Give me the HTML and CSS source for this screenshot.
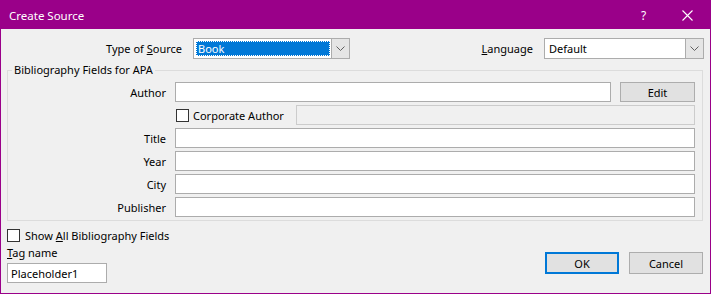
FILE: index.html
```html
<!DOCTYPE html>
<html lang="en">
<head>
    <meta charset="UTF-8">
    <meta name="viewport" content="width=device-width, initial-scale=1.0">
    <title>Create Source</title>
    <link rel="stylesheet" href="styles.css">
</head>
<body>

    <div class="dialog">
        <div class="titlebar">
            <span class="title">Create Source</span>
            <span class="help">?</span>
            <svg class="close" width="11" height="11" viewBox="0 0 11 11">
                <path d="M0.5 0.5 L10.5 10.5 M10.5 0.5 L0.5 10.5" stroke="#fff" stroke-width="1.1" fill="none"/>
            </svg>
        </div>

        <div class="content">
            <div class="top-row">
                <span class="type-label">Type of <u>S</u>ource</span>
                <div class="combo combo-type">
                    <span class="combo-value"><span class="selected">Book</span></span>
                    <span class="combo-btn">
                        <svg width="9" height="5" viewBox="0 0 9 5"><path d="M0.5 0.5 L4.5 4.5 L8.5 0.5" stroke="#606060" fill="none"/></svg>
                    </span>
                </div>
                <span class="lang-label"><u>L</u>anguage</span>
                <div class="combo combo-lang">
                    <span class="combo-value">Default</span>
                    <span class="combo-btn">
                        <svg width="9" height="5" viewBox="0 0 9 5"><path d="M0.5 0.5 L4.5 4.5 L8.5 0.5" stroke="#606060" fill="none"/></svg>
                    </span>
                </div>
            </div>

            <fieldset class="group">
                <legend>Bibliography Fields for APA</legend>
                <div class="fields">
                    <span class="field-label">Author</span>
                    <div class="author-line">
                        <input type="text" class="text">
                        <button class="btn edit">Edit</button>
                    </div>

                    <span></span>
                    <div class="corp-line">
                        <span class="check"></span>
                        <span class="corp-label">Corporate Author</span>
                        <input type="text" class="text" disabled>
                    </div>

                    <span class="field-label">Title</span>
                    <input type="text" class="text">

                    <span class="field-label">Year</span>
                    <input type="text" class="text">

                    <span class="field-label">City</span>
                    <input type="text" class="text">

                    <span class="field-label">Publisher</span>
                    <input type="text" class="text">
                </div>
            </fieldset>

            <div class="show-all">
                <span class="check"></span>
                <span>Show <u>A</u>ll Bibliography Fields</span>
            </div>

            <div class="bottom">
                <div class="tag">
                    <div class="tag-label"><u>T</u>ag name</div>
                    <input type="text" class="text tag-input" value="Placeholder1">
                </div>
                <div class="buttons">
                    <button class="btn ok">OK</button>
                    <button class="btn">Cancel</button>
                </div>
            </div>
        </div>
    </div>

</body>
</html>
```

FILE: styles.css
```css
body {
    margin: 0;
    font-family: "Noto Sans", "Open Sans", sans-serif;
    font-size: 11px;
    color: #000;
    background: #f0f0f0;
}
.dialog {
    width: 711px;
    height: 294px;
    box-sizing: border-box;
    border: 1px solid #9a0089;
    border-top: none;
    background: #f0f0f0;
    display: flex;
    flex-direction: column;
}
.titlebar {
    height: 29px;
    box-sizing: border-box;
    margin: 0 -1px;
    padding: 2px 0 0 9px;
    background: #9a0089;
    color: #fff;
    display: flex;
    align-items: center;
}
.title {
    flex: 1;
    font-size: 11.5px;
}
.help {
    width: 12px;
    margin-right: 29px;
    font-size: 12px;
}
.close {
    margin-right: 18px;
}
.content {
    padding: 9px 6px 0 6px;
}

/* top row */
.top-row {
    display: flex;
    align-items: center;
    height: 21px;
}
.type-label {
    width: 175px;
    text-align: right;
    margin-right: 11px;
}
.combo {
    height: 21px;
    box-sizing: border-box;
    border: 1px solid #acacac;
    background: #fff;
    display: flex;
}
.combo-type {
    width: 157px;
}
.combo-lang {
    width: 160px;
}
.lang-label {
    margin-left: auto;
    margin-right: 11px;
}
.combo-value {
    flex: 1;
    padding: 2px 1px 2px 2px;
    display: flex;
    align-items: center;
    line-height: 15px;
}
.selected {
    flex: 1;
    background: #0078d7;
    color: #fff;
    padding-left: 2px;
    outline: 1px dotted #ffffff;
    outline-offset: -1px;
}
.combo-lang .combo-value {
    padding-left: 4px;
}
.combo-btn {
    width: 17px;
    margin: -1px -1px -1px 0;
    border: 1px solid #acacac;
    background: #e5e5e5;
    display: flex;
    align-items: center;
    justify-content: center;
}

/* group box */
.group {
    margin: 3px 1px 0 0;
    padding: 4px 7px 3px 0;
    border: 1px solid #dcdcdc;
    min-width: 0;
}
.group legend {
    padding: 0 2px;
    margin-left: 4px;
    line-height: 16px;
}
.fields {
    display: grid;
    grid-template-columns: 158px 1fr;
    column-gap: 9px;
    row-gap: 3px;
}
.field-label {
    text-align: right;
    align-self: center;
}
.text {
    height: 20px;
    box-sizing: border-box;
    border: 1px solid #acacac;
    background: #fff;
    padding: 0 3px;
    font: inherit;
    margin: 0;
    outline: none;
}
.text:disabled {
    background: #f0f0f0;
    border-color: #cccccc;
}
.author-line {
    display: flex;
    gap: 9px;
}
.author-line .text {
    flex: 1;
}
.btn {
    height: 20px;
    width: 75px;
    box-sizing: border-box;
    border: 1px solid #adadad;
    background: #e1e1e1;
    font: inherit;
    color: #000;
    padding: 0;
}
.corp-line {
    display: flex;
    align-items: center;
    height: 20px;
}
.check {
    width: 13px;
    height: 13px;
    box-sizing: border-box;
    border: 1px solid #333;
    background: #fff;
    display: inline-block;
}
.corp-line .check {
    margin-left: 1px;
}
.corp-label {
    margin-left: 4px;
    margin-right: 12px;
}
.corp-line .text {
    flex: 1;
}

/* bottom */
.show-all {
    display: flex;
    align-items: center;
    gap: 5px;
    margin-top: 7px;
    height: 14px;
}
.bottom {
    display: flex;
    justify-content: space-between;
    margin-top: 3px;
}
.tag-label {
    line-height: 16px;
    margin-bottom: 2px;
}
.tag-input {
    width: 100px;
    padding-left: 3px;
}
.buttons {
    display: flex;
    gap: 10px;
    margin-top: 7px;
    margin-right: 1px;
}
.buttons .btn {
    width: 74px;
    height: 22px;
}
.buttons .btn.ok {
    border: 2px solid #0078d7;
}
```
